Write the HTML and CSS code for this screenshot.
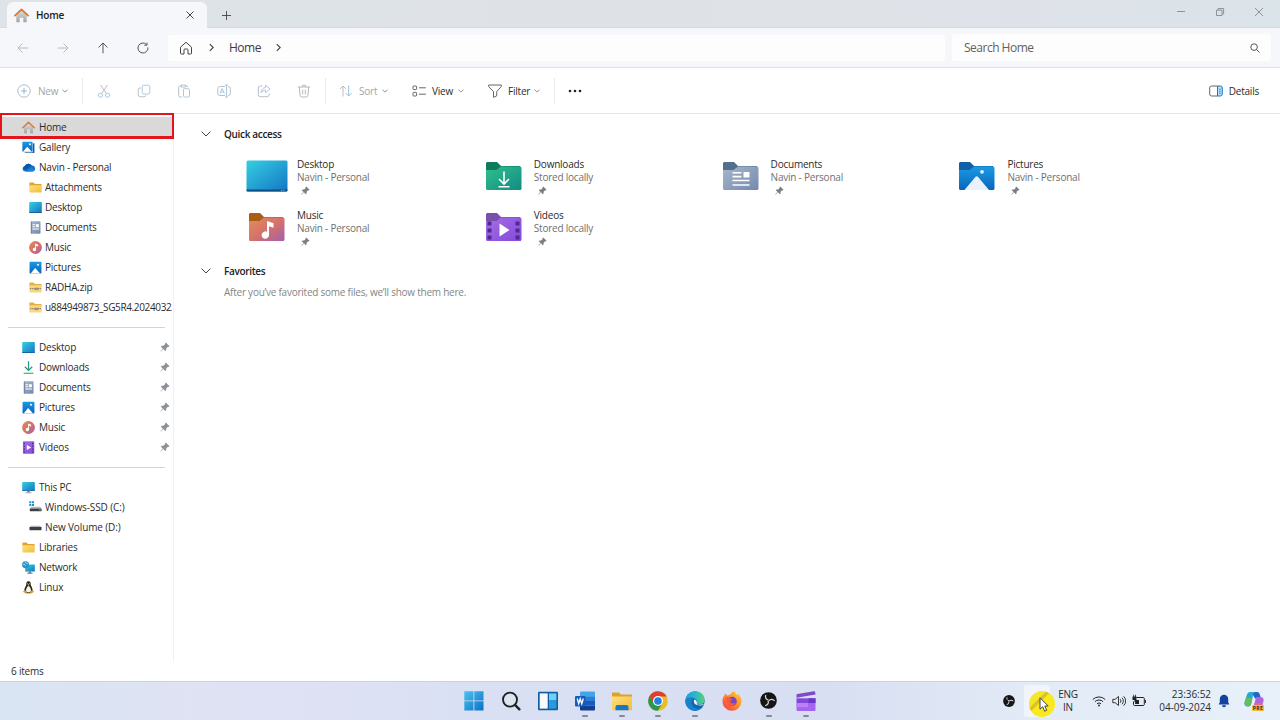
FILE: index.html
```html
<!DOCTYPE html>
<html lang="en">
<head>
    <meta charset="UTF-8">
    <meta name="viewport" content="width=device-width, initial-scale=1.0">
    <title>Home - File Explorer</title>
    <link rel="stylesheet" href="styles.css">
</head>
<body>
    <!-- shared icons -->
    <svg class="sprite" width="0" height="0">
        <defs>
            <linearGradient id="gSky" x1="0" y1="0" x2="1" y2="1"><stop offset="0" stop-color="#35cfe2"/><stop offset="1" stop-color="#1475c4"/></linearGradient>
            <linearGradient id="gBlue" x1="0" y1="0" x2="0" y2="1"><stop offset="0" stop-color="#1a9be4"/><stop offset="1" stop-color="#0a64ba"/></linearGradient>
            <linearGradient id="gStart" x1="0" y1="0" x2="1" y2="1"><stop offset="0" stop-color="#4cc3ee"/><stop offset="1" stop-color="#0a6fca"/></linearGradient>
            <linearGradient id="gGreen" x1="0" y1="0" x2="1" y2="1"><stop offset="0" stop-color="#30c08b"/><stop offset="1" stop-color="#128b84"/></linearGradient>
            <linearGradient id="gDoc" x1="0" y1="0" x2="1" y2="1"><stop offset="0" stop-color="#a5b8cf"/><stop offset="1" stop-color="#7489ac"/></linearGradient>
            <linearGradient id="gMusic" x1="0" y1="0" x2="1" y2="1"><stop offset="0" stop-color="#e58c55"/><stop offset=".55" stop-color="#d2706e"/><stop offset="1" stop-color="#a25fae"/></linearGradient>
            <linearGradient id="gVideo" x1="0" y1="0" x2="1" y2="1"><stop offset="0" stop-color="#a66fe3"/><stop offset="1" stop-color="#8449dc"/></linearGradient>
            <linearGradient id="gFolder" x1="0" y1="0" x2="1" y2="1"><stop offset="0" stop-color="#ffdf7c"/><stop offset="1" stop-color="#f2bd3d"/></linearGradient>
            <linearGradient id="gWall" x1="0" y1="0" x2="0" y2="1"><stop offset="0" stop-color="#dedede"/><stop offset="1" stop-color="#a0a3a6"/></linearGradient>
            <linearGradient id="gEdge" x1="0" y1="0" x2="1" y2="0"><stop offset="0" stop-color="#1e9fe0"/><stop offset=".55" stop-color="#2bb9c8"/><stop offset="1" stop-color="#5ed06b"/></linearGradient>
            <linearGradient id="gFox" x1="1" y1="0" x2="0" y2="1"><stop offset="0" stop-color="#ffd43a"/><stop offset=".5" stop-color="#ff8a26"/><stop offset="1" stop-color="#f0305c"/></linearGradient>
        </defs>

        <symbol id="home" viewBox="0 0 14 14">
            <path d="M2.2 6.3 7 2l4.8 4.3v6.9H8.7V9H5.3v4.2H2.2z" fill="url(#gWall)"/>
            <path d="M.8 7.2 7 1.4l6.2 5.8" fill="none" stroke="#dd7a33" stroke-width="1.6" stroke-linecap="round" stroke-linejoin="round"/>
        </symbol>
        <symbol id="gallery" viewBox="0 0 14 14">
            <path d="M3 2.5h10.4v10.3H3z" fill="#125ca3"/>
            <rect x=".4" y=".8" width="11.4" height="11.2" rx=".8" fill="#eef7ff"/>
            <rect x=".4" y=".8" width="11" height="10.8" rx=".8" fill="url(#gBlue)"/>
            <path d="m1 11.6 4.6-5.4 5 5.4z" fill="#fff"/><circle cx="8.6" cy="3.5" r="1" fill="#fff"/>
        </symbol>
        <symbol id="cloud" viewBox="0 0 14 14">
            <path d="M3.4 11.3a3 3 0 0 1-.5-5.9 4.3 4.3 0 0 1 7.6-.5 3.2 3.2 0 0 1 .8 6.4z" fill="#1272c9"/>
            <path d="M2.9 5.4a4.3 4.3 0 0 1 7.6-.5L4.2 9.5 1 8z" fill="#0a58a8"/>
            <path d="m4 11.3 6-3.6 3.6 1.5a2.8 2.8 0 0 1-2.3 2.1z" fill="#1c86d8"/>
        </symbol>
        <symbol id="folder" viewBox="0 0 14 14">
            <path d="M.4 2.4c0-.5.3-.8.8-.8h3.7l1.5 1.5h6.400c.5 0 .8.3.8.8v2H.4z" fill="#e0a42d"/>
            <path d="M.4 4.700h13.200v7c0 .5-.3.800-.8.800H1.200a.8.800 0 0 1-.8-.8z" fill="url(#gFolder)"/>
        </symbol>
        <symbol id="zip" viewBox="0 0 14 14">
            <path d="M.4 2.4c0-.5.3-.8.8-.8h3.7l1.5 1.5h6.400c.5 0 .8.3.8.8v2H.4z" fill="#e3ae45"/>
            <path d="M.4 4.700h13.200v7c0 .5-.3.800-.8.800H1.200a.8.800 0 0 1-.8-.8z" fill="#f8d87c"/>
            <path d="M1 8.200h12" stroke="#9c8450" stroke-width="1.400" stroke-dasharray="1.500 .7"/><path d="M6 7.200h4v2.600H6z" fill="#8995a1"/>
        </symbol>
        <symbol id="desktop" viewBox="0 0 14 14">
            <rect x=".2" y="1.2" width="13.6" height="11.6" rx=".8" fill="url(#gSky)"/>
            <path d="M.2 11.8h13.600v.4c0 .4-.3.600-.8.600H1c-.5 0-.8-.2-.8-.6z" fill="#12629d"/>
        </symbol>
        <symbol id="docs" viewBox="0 0 14 14">
            <rect x="2" y=".4" width="10.4" height="13.2" rx=".8" fill="url(#gDoc)"/>
            <path d="M3.8 4h3M3.8 6.2h3M3.800 8.700h7" stroke="#fff" stroke-width="1.100"/><path d="M7.600 3.400h3v3.300h-3z" fill="#fff"/>
            <path d="M2 .6h1v12.8H2z" fill="#6b7f9e"/>
        </symbol>
        <symbol id="music" viewBox="0 0 14 14">
            <circle cx="7" cy="7" r="6.9" fill="url(#gMusic)"/>
            <path d="M6.6 2.8 9.8 4v1.9L7.6 5.2v4a1.8 1.8 0 1 1-1-1.6z" fill="#fff"/>
        </symbol>
        <symbol id="pictures" viewBox="0 0 14 14">
            <rect x=".6" y=".8" width="12.8" height="12.6" rx=".8" fill="url(#gBlue)"/>
            <path d="m1.8 13.400 4.800-5.900 5.400 5.900z" fill="#fff"/><circle cx="9.7" cy="4" r="1.1" fill="#fff"/>
        </symbol>
        <symbol id="videos" viewBox="0 0 14 14">
            <rect x="1" y=".2" width="12.200" height="13.600" rx=".8" fill="url(#gVideo)"/>
            <path d="M2.4 2v11M11.6 2v11" stroke="#4d2792" stroke-width="1.4" stroke-dasharray="1.5 1.5"/>
            <path d="m5.2 4.2 4.6 2.8-4.6 2.8z" fill="#fff"/>
        </symbol>
        <symbol id="downloads" viewBox="0 0 14 14">
            <path d="M7 .4v9.600M3 6.200l4 4 4-4M1.800 13.200h10.400" fill="none" stroke="#1c9c7c" stroke-width="1.300"/>
        </symbol>
        <symbol id="pc" viewBox="0 0 14 14">
            <rect x=".2" y="1.100" width="13.600" height="9.400" rx=".7" fill="url(#gSky)"/><path d="M.2 9.700h13.600v.8H.2z" fill="#155d91"/>
            <path d="M5.600 10.500h2.800v2H5.600z" fill="#77899a"/><path d="M3.800 12.200h6.400v1H3.800z" fill="#97a5b1"/>
        </symbol>
        <symbol id="ssd" viewBox="0 0 14 14">
            <path d="M.3.3h2.200v2.200H.3zM3.200.3h2.200v2.200H3.200zM.3 3.200h2.200v2.200H.3zM3.200 3.200h2.200v2.200H3.200z" fill="#1696c9"/>
            <path d="M2.400 6.200h9.800l1.300 2H1z" fill="#b5b8ba"/><rect x=".8" y="8" width="12.800" height="3" rx=".5" fill="#3b4046"/><path d="M11 9.100h1.600v.8H11z" fill="#9adbb5"/>
        </symbol>
        <symbol id="drive" viewBox="0 0 14 14">
            <path d="M2 5h10l1.300 1.800H.7z" fill="#b5b8ba"/><rect x=".5" y="6.500" width="13" height="3.500" rx=".5" fill="#3b4046"/>
        </symbol>
        <symbol id="network" viewBox="0 0 14 14">
            <path d="M3.400 3.800h10.400v7.600H3.400z" fill="url(#gSky)"/><path d="M7.200 11.400h2.600v1.300h1.600v.9H5.600v-.9h1.600z" fill="#587c9c"/>
            <circle cx="3.800" cy="4" r="3.700" fill="#2993c6"/><path d="M1.200 3.600c1.400-.6 2.300.5 2.600 1.600M3.200.8c.4 1.400 1.700 1.800 3 2" stroke="#b9e9f7" fill="none"/>
        </symbol>
        <symbol id="linux" viewBox="0 0 14 14">
            <path d="M7 .4c-2 0-2.5 1.5-2.3 3.2C4.8 5.4 2.6 7 2.4 10.4c0 2 2 2.9 4.6 2.9s4.600-.9 4.600-2.900C11.400 7 9.200 5.400 9.300 3.600 9.500 1.900 9 .4 7 .4z" fill="#20201e"/>
            <path d="M7 5C5.600 6 4.300 8 4.300 10.200c0 1.300 1.100 2.100 2.700 2.100s2.700-.8 2.700-2.100C9.700 8 8.400 6 7 5z" fill="#f4f2e8"/>
            <path d="m5.800 3.800 1.200-.6 1.300.6L7 5zM.8 11.600l2.500-1.900 2.100 2.900-1 1.100zM13.200 11.600l-2.500-1.900-2.100 2.900 1 1.100z" fill="#dca632"/>
            <circle cx="6.100" cy="2.700" r=".5" fill="#fff"/><circle cx="7.900" cy="2.700" r=".5" fill="#fff"/>
        </symbol>
        <symbol id="pin" viewBox="0 0 10 10">
            <path d="M5.800.5 9.500 4.200 8.600 5 7.900 4.800 6.200 6.500 6.200 8.200 5.300 9.100 3.300 7 .7 9.600.4 9.300 2.900 6.600.8 4.700 1.700 3.800 3.500 3.800 5.200 2.100 5 1.400z" fill="currentColor"/>
        </symbol>
        <symbol id="chevron" viewBox="0 0 10 10"><path d="m.6 2.600 4.400 4.400 4.400-4.400" fill="none" stroke="currentColor"/></symbol>
        <symbol id="obs" viewBox="0 0 20 20">
            <circle cx="10" cy="10" r="9.8" fill="#161617"/>
            <g fill="none" stroke="#d6d6d8" stroke-width="1.500">
                <path d="M10 9.500C7.200 9 5.800 6.500 6.800 3.600"/>
                <path d="M10 9.500C7.200 9 5.800 6.500 6.800 3.600" transform="rotate(120 10 10)"/>
                <path d="M10 9.500C7.200 9 5.800 6.500 6.800 3.600" transform="rotate(240 10 10)"/>
            </g>
        </symbol>
    </svg>

    <div class="window">
        <header class="titlebar">
            <div class="tab">
                <svg class="tab-icon"><use href="#home"/></svg>
                <span class="tab-title">Home</span>
                <svg class="tab-close" viewBox="0 0 8 8"><path d="m.5.5 7 7m0-7-7 7" fill="none" stroke="#333" stroke-width=".9"/></svg>
            </div>
            <svg class="new-tab" viewBox="0 0 9 9"><path d="M4.500 0v9M0 4.500h9" stroke="#444" stroke-width=".9"/></svg>
            <div class="window-buttons">
                <svg viewBox="0 0 10 10"><path d="M1 4.500h8" stroke="#888" stroke-width=".9"/></svg>
                <svg viewBox="0 0 10 10"><path d="M1.500 3.200h5.500v5.300H1.500zM3.200 3V1.500h5.400v5.400H7.200" fill="none" stroke="#888" stroke-width=".9"/></svg>
                <svg viewBox="0 0 10 10"><path d="m1 1 8 8m0-8-8 8" stroke="#888" stroke-width=".9"/></svg>
            </div>
        </header>

        <nav class="navbar">
            <div class="nav-buttons">
                <svg class="off" viewBox="0 0 12 12"><path d="M11.300 6H1m4.500-4.500L1 6l4.500 4.500"/></svg>
                <svg class="off" viewBox="0 0 12 12"><path d="M.7 6H11M6.500 1.500 11 6l-4.500 4.500"/></svg>
                <svg viewBox="0 0 12 12"><path d="M6 11.300V1M1.500 5.500 6 1l4.500 4.500"/></svg>
                <svg viewBox="0 0 12 12"><path d="M10.900 5.400a5 5 0 1 1-1.500-3M10 .6v2.600H7.300"/></svg>
            </div>
            <div class="address">
                <svg class="address-home" viewBox="0 0 14 14"><path d="M1.500 6.200 7 1.300l5.500 4.900v6c0 .5-.3.8-.8.8H9V8.800c0-.5-.3-.8-.8-.8H5.800c-.5 0-.8.3-.8.8V13H2.300c-.5 0-.8-.3-.8-.8z"/></svg>
                <svg class="arrow" viewBox="0 0 8 8"><path d="m2.500 1 3 3-3 3"/></svg>
                <span class="crumb">Home</span>
                <svg class="arrow" viewBox="0 0 8 8"><path d="m2.500 1 3 3-3 3"/></svg>
            </div>
            <div class="search">
                <span class="search-text">Search Home</span>
                <svg viewBox="0 0 10 10"><circle cx="4.100" cy="4.100" r="3.300"/><path d="m6.500 6.500 3 3"/></svg>
            </div>
        </nav>

        <div class="toolbar">
            <div class="tool new off">
                <svg viewBox="0 0 14 14"><circle cx="7" cy="7" r="6.200" stroke="#a9b5be"/><path d="M7 4v6M4 7h6" stroke="#7fb2d8"/></svg>
                <span class="new-label">New</span>
                <svg class="caret"><use href="#chevron"/></svg>
            </div>
            <div class="file-tools">
                <svg viewBox="0 0 14 14"><path d="M3.500 1 9.300 9.500M10.500 1 4.700 9.500" stroke="#b3b8bd"/><circle cx="3.500" cy="11.200" r="2.100"/><circle cx="10.500" cy="11.200" r="2.100"/></svg>
                <svg viewBox="0 0 14 14"><rect x="5.200" y="1.200" width="7.600" height="8.800" rx="1.600"/><path d="M4 4H3a1.800 1.800 0 0 0-1.800 1.800v4.700A2.300 2.300 0 0 0 3.500 12.800H7a2 2 0 0 0 1.900-1.500" stroke="#b3b8bd"/></svg>
                <svg viewBox="0 0 14 14"><path d="M5 13H3a1.300 1.300 0 0 1-1.300-1.300V3.300C1.700 2.600 2.300 2 3 2h1M8.700 2h1c.8 0 1.300.6 1.300 1.300M4 1h4.700v2H4z" stroke="#b3b8bd"/><rect x="6.500" y="4.700" width="6" height="8.300" rx="1"/></svg>
                <svg viewBox="0 0 14 14"><path d="M8 2.500H2.800a2 2 0 0 0-2 2v5a2 2 0 0 0 2 2H8M11 2.500h.3a2 2 0 0 1 2 2v5a2 2 0 0 1-2 2H11" stroke="#b3b8bd"/><path d="M9.500 1v12M8 1h3M8 13h3M3 9.500l2.200-5 2.200 5M3.700 8h3"/></svg>
                <svg viewBox="0 0 14 14"><path d="M5.500 2H3.300a2 2 0 0 0-2 2v6.700a2 2 0 0 0 2 2h6.900a2 2 0 0 0 2-2V9.500" stroke="#b3b8bd"/><path d="M8.600 1.200v2.400C6 3.800 4.500 5.500 4 8.700c1.200-1.700 2.500-2.400 4.600-2.400v2.500L13 5z"/></svg>
                <svg viewBox="0 0 14 14"><path d="M.8 3h12.400M5 3a2 2 0 0 1 4 0M2.200 3l1 8.700c.1.800.6 1.300 1.400 1.300h4.800c.8 0 1.300-.5 1.400-1.300l1-8.700M5.700 5.700v4.600M8.300 5.700v4.600" stroke="#a9afb4"/></svg>
            </div>
            <div class="tool sort off">
                <svg viewBox="0 0 14 14"><path d="M4 12.500V2M1 5l3-3 3 3" stroke="#b3b8bd"/><path d="M9.700 1.500V12M6.700 9l3 3 3-3" stroke="#90b9da"/></svg>
                <span class="sort-label">Sort</span>
                <svg class="caret"><use href="#chevron"/></svg>
            </div>
            <div class="tool view">
                <svg viewBox="0 0 14 14"><rect x="1" y="2" width="3.600" height="3.600" rx=".8"/><rect x="1" y="8.400" width="3.600" height="3.600" rx=".8"/><path d="M7 3.800h6.800M7 10.200h6.800"/></svg>
                <span class="view-label">View</span>
                <svg class="caret"><use href="#chevron"/></svg>
            </div>
            <div class="tool filter">
                <svg viewBox="0 0 14 14"><path d="M.7 1h12.600v1.500L8.700 7.700v4.200L5.500 13.300V7.700L.7 2.500z"/></svg>
                <span class="filter-label">Filter</span>
                <svg class="caret"><use href="#chevron"/></svg>
            </div>
            <svg class="more" viewBox="0 0 14 4"><circle cx="2" cy="2" r="1.300"/><circle cx="7" cy="2" r="1.300"/><circle cx="12" cy="2" r="1.300"/></svg>
            <div class="details">
                <svg viewBox="0 0 14 12"><path d="M8.500 1H11.300a2 2 0 0 1 2 2v6a2 2 0 0 1-2 2H8.500z" fill="#b9def5" stroke="#1977be"/><path d="M8.500 1H2.700a2 2 0 0 0-2 2v6a2 2 0 0 0 2 2h5.800" fill="none" stroke="#666"/><path d="M10 4.200h1.700M10 6.200h1.700M10 8.200h1.700" stroke="#1977be" stroke-width=".8"/></svg>
                <span>Details</span>
            </div>
        </div>

        <div class="main">
            <aside class="sidebar">
                <div class="row selected"><svg><use href="#home"/></svg><span>Home</span></div>
                <div class="row"><svg><use href="#gallery"/></svg><span>Gallery</span></div>
                <div class="row"><svg><use href="#cloud"/></svg><span>Navin - Personal</span></div>
                <div class="row child"><svg><use href="#folder"/></svg><span>Attachments</span></div>
                <div class="row child"><svg><use href="#desktop"/></svg><span>Desktop</span></div>
                <div class="row child"><svg><use href="#docs"/></svg><span>Documents</span></div>
                <div class="row child"><svg><use href="#music"/></svg><span>Music</span></div>
                <div class="row child"><svg><use href="#pictures"/></svg><span>Pictures</span></div>
                <div class="row child"><svg><use href="#zip"/></svg><span>RADHA.zip</span></div>
                <div class="row child"><svg><use href="#zip"/></svg><span class="long-name">u884949873_SG5R4.20240322</span></div>
                <div class="separator"></div>
                <div class="row"><svg><use href="#desktop"/></svg><span>Desktop</span><svg class="row-pin"><use href="#pin"/></svg></div>
                <div class="row"><svg><use href="#downloads"/></svg><span>Downloads</span><svg class="row-pin"><use href="#pin"/></svg></div>
                <div class="row"><svg><use href="#docs"/></svg><span>Documents</span><svg class="row-pin"><use href="#pin"/></svg></div>
                <div class="row"><svg><use href="#pictures"/></svg><span>Pictures</span><svg class="row-pin"><use href="#pin"/></svg></div>
                <div class="row"><svg><use href="#music"/></svg><span>Music</span><svg class="row-pin"><use href="#pin"/></svg></div>
                <div class="row"><svg><use href="#videos"/></svg><span>Videos</span><svg class="row-pin"><use href="#pin"/></svg></div>
                <div class="separator"></div>
                <div class="row"><svg><use href="#pc"/></svg><span>This PC</span></div>
                <div class="row child drive"><svg><use href="#ssd"/></svg><span>Windows-SSD (C:)</span></div>
                <div class="row child drive"><svg><use href="#drive"/></svg><span>New Volume (D:)</span></div>
                <div class="row"><svg><use href="#folder"/></svg><span>Libraries</span></div>
                <div class="row"><svg><use href="#network"/></svg><span>Network</span></div>
                <div class="row"><svg><use href="#linux"/></svg><span>Linux</span></div>
                <div class="highlight"></div>
            </aside>

            <main class="content">
                <div class="section-title"><svg><use href="#chevron"/></svg><h2>Quick access</h2></div>
                <div class="tiles">
                    <div class="tile">
                        <svg class="tile-icon" viewBox="0 0 42 34"><rect x=".5" y="1.500" width="41" height="31" rx="1.500" fill="url(#gSky)"/><path d="M.5 30.600h41v.6c0 .8-.6 1.400-1.500 1.400H2c-.9 0-1.500-.6-1.500-1.400z" fill="#0e4f86"/><path d="M35 31.400h4" stroke="#b0d6ee" stroke-width=".7" stroke-dasharray="1 .8"/></svg>
                        <div class="tile-text"><b>Desktop</b><span>Navin - Personal</span><svg><use href="#pin"/></svg></div>
                    </div>
                    <div class="tile">
                        <svg class="tile-icon" viewBox="0 0 42 34"><path d="M3 4.500C3 3.700 3.700 3 4.500 3H14l4 4h19v6H3z" fill="#0d7c5c"/><path d="M3 11h10.500L18 7.500h19c.8 0 1.500.6 1.500 1.500v20.500c0 .8-.7 1.500-1.500 1.500H4.500A1.500 1.500 0 0 1 3 29.500z" fill="url(#gGreen)"/><path d="M21 12.500v12M16 20l5 5 5-5M15.500 27.800h11" fill="none" stroke="#fff" stroke-width="1.600"/></svg>
                        <div class="tile-text"><b>Downloads</b><span>Stored locally</span><svg><use href="#pin"/></svg></div>
                    </div>
                    <div class="tile">
                        <svg class="tile-icon" viewBox="0 0 42 34"><path d="M3 4.500C3 3.700 3.700 3 4.500 3H14l4 4h19v6H3z" fill="#53708a"/><path d="M3 11h10.500L18 7.500h19c.8 0 1.500.6 1.500 1.500v20.500c0 .8-.7 1.500-1.500 1.500H4.500A1.500 1.500 0 0 1 3 29.500z" fill="url(#gDoc)"/><path d="M12.500 13.800h9M12.500 17.600h9M12.500 21.500h17M12.500 26h17" stroke="#fff" stroke-width="1.600"/><path d="M23.500 13h6v5.500h-6z" fill="#fff"/></svg>
                        <div class="tile-text"><b>Documents</b><span>Navin - Personal</span><svg><use href="#pin"/></svg></div>
                    </div>
                    <div class="tile">
                        <svg class="tile-icon" viewBox="0 0 42 34"><path d="M3 4.500C3 3.700 3.700 3 4.500 3H14l4 4h19v6H3z" fill="#1160a9"/><path d="M3 11h10.500L18 7.500h19c.8 0 1.500.6 1.500 1.500v20.500c0 .8-.7 1.500-1.500 1.500H4.500A1.500 1.500 0 0 1 3 29.500z" fill="url(#gBlue)"/><path d="M8.500 31 19.600 17.800c.8-.8 1.600-.8 2.300 0L33 31z" fill="#e9f2fc"/><circle cx="26" cy="12.800" r="1.900" fill="#d9f2ff"/></svg>
                        <div class="tile-text"><b>Pictures</b><span>Navin - Personal</span><svg><use href="#pin"/></svg></div>
                    </div>
                    <div class="tile">
                        <svg class="tile-icon" viewBox="0 0 42 34"><path d="M3 4.500C3 3.700 3.700 3 4.500 3H14l4 4h19v6H3z" fill="#a95d16"/><path d="M3 11h10.500L18 7.500h19c.8 0 1.500.6 1.500 1.500v20.500c0 .8-.7 1.500-1.500 1.500H4.500A1.500 1.500 0 0 1 3 29.500z" fill="url(#gMusic)"/><path d="M21 11l6.500 2.300v4.500L23 16.200V25a3.700 3.700 0 1 1-2-3.200z" fill="#fff"/></svg>
                        <div class="tile-text"><b>Music</b><span>Navin - Personal</span><svg><use href="#pin"/></svg></div>
                    </div>
                    <div class="tile">
                        <svg class="tile-icon" viewBox="0 0 42 34"><path d="M3 4.500C3 3.700 3.700 3 4.500 3H14l4 4h19v6H3z" fill="#7951ab"/><path d="M3 11h10.500L18 7.500h19c.8 0 1.500.6 1.500 1.500v20.500c0 .8-.7 1.500-1.500 1.500H4.500A1.500 1.500 0 0 1 3 29.500z" fill="url(#gVideo)"/><path d="M6.500 11.500V30M34.500 11.500V30" stroke="#52298f" stroke-width="4" stroke-dasharray="4 3"/><path d="m16.500 13.500 10 6.500-10 6.500z" fill="#fff"/></svg>
                        <div class="tile-text"><b>Videos</b><span>Stored locally</span><svg><use href="#pin"/></svg></div>
                    </div>
                </div>
                <div class="section-title"><svg><use href="#chevron"/></svg><h2>Favorites</h2></div>
                <p class="empty">After you’ve favorited some files, we’ll show them here.</p>
            </main>
        </div>

        <div class="status">6 items</div>
    </div>

    <footer class="taskbar">
        <div class="apps">
            <div class="app"><svg viewBox="0 0 20 20"><path d="M.3.3h9.200v9.200H.3zM10.300.3h9.200v9.200h-9.200zM.3 10.300h9.200v9.200H.3zM10.300 10.300h9.200v9.200h-9.200z" fill="url(#gStart)"/></svg></div>
            <div class="app"><svg viewBox="0 0 20 20"><circle cx="9" cy="8.600" r="7" fill="#dde5ef" stroke="#202226" stroke-width="1.900"/><path d="m14 13.800 4.400 4.500" stroke="#202226" stroke-width="2.400" stroke-linecap="round"/></svg></div>
            <div class="app"><svg viewBox="0 0 20 20"><rect x="0" y=".8" width="20" height="18.400" rx="1" fill="#125ea1"/><path d="M1.700 2.400h8v15.200h-8z" fill="#f7fbff"/><path d="M11 2.400h7.400v7H11z" fill="#6bd3fa"/><path d="M11 9.400h7.400v8.200H11z" fill="#2b99df"/></svg></div>
            <div class="app open"><svg viewBox="0 0 20 20"><path d="M5 1.500C5 1 5.400.6 6 .6h13c.6 0 1 .4 1 .9v4.200H5z" fill="#41a5ee"/><path d="M5 5.500h15V10H5z" fill="#2b7cd3"/><path d="M5 10h15v4.500H5z" fill="#185abd"/><path d="M5 14.500h15v4c0 .6-.4.900-1 .9H6c-.6 0-1-.3-1-.9z" fill="#103f91"/><rect x="0" y="5" width="10.500" height="10.500" rx="1" fill="#185abd"/><path d="m2.200 7.500 1.500 5.300 1.500-5 1.600 5L8.300 7.500" fill="none" stroke="#fff" stroke-width="1.300"/></svg></div>
            <div class="app open"><svg viewBox="0 0 20 20"><path d="M0 2.500c0-.6.400-1 1-1h6l2 2h10c.6 0 1 .4 1 1V8H0z" fill="#dda22b"/><path d="M0 5.500h20v12.800c0 .6-.4 1-1 1H1c-.6 0-1-.4-1-1z" fill="url(#gFolder)"/><path d="M3.500 19.300V16a2 2 0 0 1 2-2h9a2 2 0 0 1 2 2v3.300z" fill="#1878c6"/></svg></div>
            <div class="app open"><svg viewBox="0 0 20 20"><circle cx="10" cy="10" r="9.800" fill="#e9bd27"/><path d="M10 10 1.500 5.100A9.800 9.800 0 0 0 10 19.800L14.500 12z" fill="#299a4c"/><path d="M1.500 5.100A9.800 9.800 0 0 1 18.700 5.600H10l-4.300 6.800z" fill="#dc4030"/><circle cx="10" cy="10" r="5" fill="#fff"/><circle cx="10" cy="10" r="3.800" fill="#277ddd"/></svg></div>
            <div class="app open"><svg viewBox="0 0 20 20"><circle cx="10" cy="10" r="9.700" fill="#1264ae"/><path d="M.4 9C1 3.800 5 .3 10 .3c5.800 0 9.700 4.100 9.700 8.400 0 3.300-2.500 5-5.200 5-1.900 0-3-.7-2.600-1.800.5-1.400-.3-4-3.400-4.800C5 6.200 1.600 7 .4 9z" fill="url(#gEdge)"/><path d="M6.800 9.500C5.500 14 9 17.600 13 17.700c1.800 0 3.500-.6 4.900-1.800A9.700 9.700 0 0 1 .4 9C2 6.500 6.100 6 8.500 7.100 7.600 7.700 7 8.600 6.800 9.500z" fill="#1783ca"/><path d="M9.200 8.500c-1.600 3.700 1.400 6.600 8.600 5.800l1.700-1.800c-1.500 1.400-7.500 2.200-7.600.2.300-1.800-.6-3.700-2.700-4.200z" fill="#eef5fb"/></svg></div>
            <div class="app"><svg viewBox="0 0 20 20"><path d="M2.500 4.500 3 2.200l2 2.300c1-.6 1.900-.8 3-.8C9.500 1.500 11 .6 12.700.2 13 2.400 14 3 15.500 4.200l.8-1.200c2.200 2 3.300 4.600 3.200 7.500A9.500 9.500 0 1 1 .6 9c.1-1.800.8-3.300 1.900-4.500z" fill="url(#gFox)"/><circle cx="10.200" cy="10.400" r="4.600" fill="#7746c2"/><path d="M4 6.500c2-.7 3.800.1 4.300 1.300 1.300-.2 2.200.2 2.500.9-1.500.2-2.400 1-2.400 2 .3 2 3.800 2.300 5.200.6-.6 3.800-4.800 4.900-7.500 2.500z" fill="#f65a36"/></svg></div>
            <div class="app open"><svg class="obs-app"><use href="#obs"/></svg></div>
            <div class="app open"><svg viewBox="0 0 20 20"><path d="M.5 6.800V4.200c0-.6.3-1 .9-1.100L18 .3c.6-.1 1 .2 1.100.8l.4 2.300z" fill="#8149c8"/><path d="M.5 7.300h19V12H.5z" fill="#8047dc"/><path d="M12.500 7.300h7V12h-7z" fill="#6b35c8"/><path d="M.5 12h19v7c0 .6-.3.900-.9.900H1.400c-.6 0-.9-.3-.9-.9z" fill="#a565ee"/><path d="M.5 12h11.500v4.200H.5z" fill="#b982f5"/></svg></div>
        </div>

        <div class="tray">
            <svg class="tray-obs"><use href="#obs"/></svg>
            <div class="tray-hover">
                <div class="click-ring"></div>
                <svg class="cursor" viewBox="0 0 10 15"><path d="M1 .8v11.400l2.700-2.500 1.900 4.500 2.100-.9-1.900-4.300h3.400z" fill="#fff" stroke="#333" stroke-width=".9"/></svg>
            </div>
            <div class="lang"><span>ENG</span><span>IN</span></div>
            <div class="tray-icons">
                <svg viewBox="0 0 14 14"><g fill="none" stroke="#222" stroke-width="1"><path d="M.8 5.500a8.800 8.800 0 0 1 12.400 0M2.900 7.700a5.800 5.800 0 0 1 8.200 0M5 9.800a2.900 2.900 0 0 1 4 0"/></g><circle cx="7" cy="11.500" r=".9" fill="#222"/></svg>
                <svg viewBox="0 0 14 14"><path d="M.8 5.300h2.400L6.500 2.500v9L3.200 8.700H.8zM8.200 5.200a2.600 2.600 0 0 1 0 3.600M10 3.700a4.700 4.700 0 0 1 0 6.600M11.700 2.300a6.600 6.600 0 0 1 0 9.400" fill="none" stroke="#222" stroke-width=".9"/></svg>
                <svg viewBox="0 0 14 14"><path d="M4.500 3.500h6.800c.6 0 1 .4 1 1v6c0 .6-.4 1-1 1H2.500c-.6 0-1-.4-1-1V7.500M13.400 6v3" fill="none" stroke="#222"/><path d="M3.500 6H7v4H3zM.5 2.500h4V6h-1v2h-1V6h-2zM1.300.8h.8v2h-.8zM3 .8h.8v2H3z" fill="#222"/></svg>
            </div>
            <div class="clock"><span>23:36:52</span><span>04-09-2024</span></div>
            <svg class="bell" viewBox="0 0 12 14"><path d="M6 .8a4.200 4.200 0 0 0-4.200 4.200v3.300L.6 10.500h10.800l-1.200-2.200V5A4.200 4.200 0 0 0 6 .8zM4 11.300h4a2 2 0 0 1-4 0z" fill="#13439c"/></svg>
            <div class="copilot">
                <svg viewBox="0 0 20 20"><path d="M7 1h6c1.500 0 2.200.8 2.700 2.200L17 7.500h-6L8.500 3z" fill="#2a5fd0"/><path d="M6.500 1H12c-1.500 0-2.300 1-2.800 2.500L7.500 12c-.5 2-2 3.500-3.800 3.500C1 15.500 0 13.500.6 11L3 3.500C3.600 1.800 4.700 1 6.500 1z" fill="#25a9ce"/><path d="M2 6.800 8.300 7 6.500 14.500c-1 2-6 1-6.100-2.500z" fill="#65bd62"/><path d="M12 6h4.200c2.800 0 4 1.800 3.200 4.500l-1.700 5.600c-.6 1.800-2 2.700-3.700 2.700H7.500c1.200-.5 1.800-1.500 2.200-3z" fill="#b166d8"/><path d="M10.500 12h8.300l-1 4c-1 2-5 3-8.500 2.500z" fill="#ed6680"/></svg>
                <span>PRE</span>
            </div>
        </div>
    </footer>
</body>
</html>
```
FILE: styles.css
```css
* {
    box-sizing: border-box;
}

body {
    margin: 0;
    width: 1280px;
    height: 720px;
    overflow: hidden;
    display: flex;
    flex-direction: column;
    font-family: "Open Sans", "Noto Sans", sans-serif;
    font-size: 10px;
    line-height: 13px;
    letter-spacing: -0.22px;
    color: #2b2b2b;
    background: #fff;
}

svg {
    display: block;
    flex: none;
}

.sprite {
    position: absolute;
}

.window {
    height: 681px;
    display: flex;
    flex-direction: column;
}

/* Title bar */
.titlebar {
    height: 28px;
    flex: none;
    display: flex;
    align-items: flex-end;
    background: linear-gradient(90deg, #dde3e6, #dfe2e8 75%, #dbe4e8);
    border-bottom: 1px solid #d5dade;
}

.tab {
    width: 200px;
    height: 26px;
    margin: 0 0 -1px 7px;
    padding: 0 13px 0 7px;
    display: flex;
    align-items: center;
    background: #f6f7fa;
    border-radius: 6px 6px 0 0;
}

.tab-icon {
    width: 15px;
    height: 15px;
}

.tab-title {
    margin-left: 7px;
    font-weight: 600;
    color: #222;
}

.tab-close {
    width: 8px;
    height: 8px;
    margin-left: auto;
}

.new-tab {
    width: 9px;
    height: 9px;
    margin: 0 0 7px 15px;
}

.window-buttons {
    display: flex;
    gap: 29px;
    margin: 0 16px 10px auto;
}

.window-buttons svg {
    width: 10px;
    height: 10px;
}

/* Navigation */
.navbar {
    height: 40px;
    flex: none;
    display: flex;
    align-items: center;
    background: #f6f7fa;
    border-bottom: 1px solid #dfe1e5;
}

.nav-buttons {
    width: 168px;
    padding-left: 17px;
    display: flex;
    gap: 28px;
}

.nav-buttons svg {
    width: 12px;
    height: 12px;
    fill: none;
    stroke: #444;
    stroke-width: 0.9;
}

.nav-buttons .off {
    stroke: #b0b2b5;
}

.address {
    width: 777px;
    height: 26px;
    padding-left: 11px;
    display: flex;
    align-items: center;
    background: #fdfdfe;
    border-radius: 3px;
    font-size: 12px;
    color: #3b3b3b;
}

.address svg {
    fill: none;
    stroke: #444;
}

.address-home {
    width: 14px;
    height: 14px;
}

.arrow {
    width: 9px;
    height: 9px;
    margin-left: 14px;
}

.crumb {
    width: 32px;
    margin-left: 13px;
    letter-spacing: -0.5px;
    white-space: nowrap;
}

.crumb + .arrow {
    margin-left: 13px;
}

.search {
    width: 319px;
    height: 27px;
    margin-left: 7px;
    padding: 0 11px 0 12px;
    display: flex;
    align-items: center;
    justify-content: space-between;
    background: #fdfdfe;
    border-radius: 3px;
    font-size: 12px;
    letter-spacing: -0.5px;
    color: #616161;
}

.search svg {
    width: 10px;
    height: 10px;
    fill: none;
    stroke: #555;
}

/* Toolbar */
.toolbar {
    height: 46px;
    flex: none;
    display: flex;
    align-items: center;
    border-bottom: 1px solid #e4e4e6;
}

.toolbar span {
    padding-top: 1px;
}

.tool {
    display: flex;
    align-items: center;
}

.tool svg {
    width: 14px;
    height: 14px;
    fill: none;
    stroke: #555;
    stroke-width: 0.9;
}

.tool.off {
    color: #a5a5a5;
}

.tool .caret {
    width: 6px;
    height: 6px;
    color: #888;
    stroke-width: 1.5;
}

.new {
    width: 82px;
    padding-left: 17px;
}

.new-label {
    width: 20px;
    margin: 0 4px 0 7px;
}

.file-tools {
    height: 26px;
    width: 244px;
    padding-left: 14px;
    display: flex;
    gap: 26px;
    align-items: center;
    border-left: 1px solid #ececee;
    border-right: 1px solid #ececee;
}

.file-tools svg {
    width: 14px;
    height: 14px;
    fill: none;
    stroke: #9fc4e0;
    stroke-width: 0.9;
}

.sort {
    width: 86px;
    padding-left: 13px;
}

.sort-label {
    width: 19px;
    margin: 0 4px 0 6px;
}

.view {
    width: 76px;
}

.view-label {
    width: 22px;
    margin: 0 4px 0 6px;
}

.filter {
    width: 67px;
    height: 26px;
    border-right: 1px solid #ececee;
}

.filter-label {
    width: 23px;
    margin: 0 3px 0 6px;
}

.more {
    width: 14px;
    height: 4px;
    margin-left: 13px;
    fill: #222;
}

.details {
    margin: 0 21px 0 auto;
    display: flex;
    align-items: center;
    gap: 6px;
}

.details svg {
    width: 14px;
    height: 12px;
}

/* Sidebar */
.main {
    height: 548px;
    flex: none;
    display: flex;
}

.sidebar {
    position: relative;
    width: 174px;
    padding-top: 3px;
    border-right: 1px solid #f1f1f1;
}

.row {
    height: 20px;
    padding: 0 3px 0 22px;
    display: flex;
    align-items: center;
    white-space: nowrap;
    overflow: hidden;
}

.row span {
    flex: 1;
    margin-left: 4px;
}

.row.child {
    padding: 0 1px 0 29px;
}

.row.child span {
    margin-left: 3px;
    overflow: hidden;
}

.row .long-name {
    letter-spacing: -0.36px;
}

.row.drive span {
    letter-spacing: -0.12px;
}

.row svg {
    width: 13px;
    height: 13px;
}

.row.selected {
    background: #d9d9d9;
}

.row .row-pin {
    width: 10px;
    height: 10px;
    color: #8b9299;
}

.separator {
    height: 20px;
    margin: 0 8px;
    background: linear-gradient(#d4d4d4, #d4d4d4) no-repeat 0 10px / 100% 1px;
}

/* red frame round the selected row */
.highlight {
    position: absolute;
    left: 0;
    top: -1px;
    width: 174px;
    height: 26px;
    border: 2px solid #e3141b;
    border-bottom-width: 3px;
}

/* Content */
.content {
    flex: 1;
    padding: 13px 0 0 27px;
}

.section-title {
    height: 14px;
    display: flex;
    align-items: center;
}

.section-title svg {
    width: 10px;
    height: 10px;
    color: #444;
}

.section-title h2 {
    margin: 0 0 0 13px;
    font-size: 10px;
    font-weight: 600;
    letter-spacing: -0.33px;
    color: #222;
}

.tiles {
    display: grid;
    grid-template-columns: repeat(4, 236.8px);
    grid-auto-rows: 51px;
    padding: 17px 0 4px 45px;
}

.tile {
    display: flex;
    gap: 9px;
}

.tile-icon {
    width: 42px;
    height: 34px;
    margin-top: 1px;
}

.tile-text {
    display: flex;
    flex-direction: column;
    color: #707070;
    line-height: 13.4px;
}

.tile-text b {
    font-weight: 400;
    color: #2b2b2b;
}

.tile-text svg {
    width: 9px;
    height: 9px;
    margin: 1px 0 0 4px;
    color: #7b7d80;
}

.empty {
    margin: 8px 0 0 23px;
    letter-spacing: -0.24px;
    color: #858585;
}

.status {
    flex: 1;
    padding: 3px 0 0 11px;
}

/* Taskbar */
.taskbar {
    position: relative;
    height: 39px;
    flex: none;
    display: flex;
    border-top: 1px solid #cfd2dc;
    background: linear-gradient(90deg, #d9e5f2, #e0e2f4 18%, #d9e0f3 40%, #d8dff2 65%, #e2eaf6 80%, #e8f1f9);
}

.apps {
    width: 368px;
    padding-left: 456px;
    box-sizing: content-box;
    display: flex;
}

.app {
    width: 36.8px;
    height: 38px;
    padding-top: 9px;
    display: flex;
    flex-direction: column;
    align-items: center;
}

.app svg {
    width: 20px;
    height: 20px;
}

.app .obs-app {
    width: 17px;
    height: 17px;
    margin: 1px 0 2px;
}

.app.open::after {
    content: "";
    width: 6px;
    height: 2px;
    margin-top: 4px;
    border-radius: 1px;
    background: #858993;
}

.tray {
    position: absolute;
    top: 0;
    right: 0;
    width: 277px;
    height: 38px;
    display: flex;
    align-items: center;
}

.tray-obs {
    width: 12px;
    height: 12px;
}

.tray-hover {
    position: relative;
    width: 26px;
    height: 32px;
    margin-left: 9px;
    border-radius: 3px;
    background: #f1f5fb;
}

.click-ring {
    position: absolute;
    left: 5px;
    top: 6px;
    width: 26px;
    height: 26px;
    border-radius: 50%;
    background: linear-gradient(135deg, #f4e62b 32%, #d7bf24 36% 40%, #f8ea1f 45%);
}

.cursor {
    position: absolute;
    left: 15px;
    top: 12px;
    width: 10px;
    height: 15px;
}

.lang {
    width: 24px;
    margin-left: 6px;
    display: flex;
    flex-direction: column;
    align-items: center;
}

.tray-icons {
    display: flex;
    gap: 6px;
    margin-left: 12px;
}

.tray-icons svg {
    width: 14px;
    height: 14px;
}

.clock {
    width: 65px;
    display: flex;
    flex-direction: column;
    align-items: flex-end;
    letter-spacing: -0.05px;
}

.bell {
    width: 12px;
    height: 14px;
    margin-left: 7px;
}

.copilot {
    position: relative;
    margin-left: 14px;
}

.copilot svg {
    width: 20px;
    height: 20px;
}

.copilot span {
    position: absolute;
    right: 0;
    bottom: 0;
    padding: 0 1px;
    background: #f5ba35;
    border-radius: 1px;
    font-size: 5px;
    line-height: 6px;
    font-weight: 700;
    letter-spacing: 0.3px;
}
```
